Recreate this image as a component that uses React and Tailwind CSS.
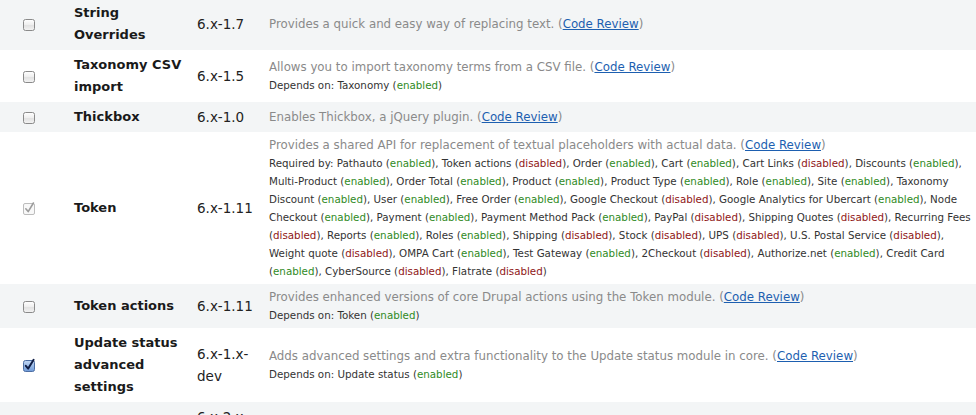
import React from "react";

const modules = [
  {
    name: "String Overrides",
    version: "6.x-1.7",
    desc: "Provides a quick and easy way of replacing text.",
    box: "off",
  },
  {
    name: "Taxonomy CSV import",
    version: "6.x-1.5",
    desc: "Allows you to import taxonomy terms from a CSV file.",
    deps: ["Depends on: Taxonomy (enabled)"],
    box: "off",
  },
  {
    name: "Thickbox",
    version: "6.x-1.0",
    desc: "Enables Thickbox, a jQuery plugin.",
    box: "off",
  },
  {
    name: "Token",
    version: "6.x-1.11",
    desc: "Provides a shared API for replacement of textual placeholders with actual data.",
    deps: [
      "Required by: Pathauto (enabled), Token actions (disabled), Order (enabled), Cart (enabled), Cart Links (disabled), Discounts (enabled),",
      "Multi-Product (enabled), Order Total (enabled), Product (enabled), Product Type (enabled), Role (enabled), Site (enabled), Taxonomy",
      "Discount (enabled), User (enabled), Free Order (enabled), Google Checkout (disabled), Google Analytics for Ubercart (enabled), Node",
      "Checkout (enabled), Payment (enabled), Payment Method Pack (enabled), PayPal (disabled), Shipping Quotes (disabled), Recurring Fees",
      "(disabled), Reports (enabled), Roles (enabled), Shipping (disabled), Stock (disabled), UPS (disabled), U.S. Postal Service (disabled),",
      "Weight quote (disabled), OMPA Cart (enabled), Test Gateway (enabled), 2Checkout (disabled), Authorize.net (enabled), Credit Card",
      "(enabled), CyberSource (disabled), Flatrate (disabled)",
    ],
    box: "locked",
  },
  {
    name: "Token actions",
    version: "6.x-1.11",
    desc: "Provides enhanced versions of core Drupal actions using the Token module.",
    deps: ["Depends on: Token (enabled)"],
    box: "off",
  },
  {
    name: "Update status advanced settings",
    version: "6.x-1.x-dev",
    desc: "Adds advanced settings and extra functionality to the Update status module in core.",
    deps: ["Depends on: Update status (enabled)"],
    box: "on",
  },
  {
    name: "Views",
    version: "6.x-2.x-dev",
    desc: "Create customized lists and queries from your database.",
    box: "off",
  },
];

// colour the (enabled) / (disabled) words, keep the parens dark
const Status = ({ text }) => {
  const parts = text.split(/\((enabled|disabled)\)/);
  return parts.map((part, i) => {
    if (i % 2 === 0) return <React.Fragment key={i}>{part}</React.Fragment>;
    return (
      <React.Fragment key={i}>
        (
        <span className={part === "enabled" ? "text-[#2f8a24]" : "text-[#8f1616]"}>
          {part}
        </span>
        )
      </React.Fragment>
    );
  });
};

const Checkbox = ({ state }) => {
  if (state === "on") {
    return (
      <svg width="14" height="15" viewBox="0 0 14 15">
        <defs>
          <linearGradient id="cbOn" x1="0" y1="0" x2="0" y2="1">
            <stop offset="0" stopColor="#c3d8f4" />
            <stop offset="1" stopColor="#6e9ad8" />
          </linearGradient>
        </defs>
        <rect x="1.5" y="2.5" width="11" height="11" rx="2" fill="url(#cbOn)" stroke="#4d6ea3" />
        <path d="M3.8 7.8 L6.2 10.6 L11.6 1.8" fill="none" stroke="#0f1d45" strokeWidth="2" strokeLinecap="round" strokeLinejoin="round" />
      </svg>
    );
  }
  if (state === "locked") {
    return (
      <svg width="14" height="15" viewBox="0 0 14 15">
        <rect x="1.5" y="2.5" width="11" height="11" rx="1.5" fill="#f8f8f8" stroke="#bdbdbd" />
        <path d="M3.8 7.8 L6.2 10.6 L11.4 2" fill="none" stroke="#9c9c9c" strokeWidth="1.6" strokeLinecap="round" strokeLinejoin="round" />
      </svg>
    );
  }
  return (
    <svg width="14" height="15" viewBox="0 0 14 15">
      <defs>
        <linearGradient id="cbOff" x1="0" y1="0" x2="0" y2="1">
          <stop offset="0" stopColor="#ffffff" />
          <stop offset="0.5" stopColor="#eeeeee" />
          <stop offset="0.55" stopColor="#e2e2e2" />
          <stop offset="1" stopColor="#f4f4f4" />
        </linearGradient>
      </defs>
      <rect x="1.5" y="2.5" width="11" height="11" rx="2" fill="url(#cbOff)" stroke="#8a8a8a" />
    </svg>
  );
};

const ModuleRow = ({ mod, striped }) => (
  <div className={`flex items-center py-1 ${striped ? "bg-[#f3f5f6]" : "bg-white"}`}>
    <div className="w-[58px] shrink-0 flex justify-center">
      <Checkbox state={mod.box} />
    </div>
    <div className="w-[139px] shrink-0 pl-[16px] pr-[7px] text-[13px] leading-[22px] font-bold text-[#1a1a1a]">
      {mod.name}
    </div>
    <div className="w-[72px] shrink-0 pr-[6px] text-[13.5px] leading-[22px] text-[#222]">
      {mod.version}
    </div>
    <div className="flex-1 min-w-0 pr-2">
      <div className="text-[11.8px] leading-[18px] text-[#8a8a8a] whitespace-nowrap">
        {mod.desc} (
        <a href="#" className="text-[#1d5fb0] underline">
          Code Review
        </a>
        )
      </div>
      {mod.deps &&
        mod.deps.map((line, i) => (
          <div key={i} className="text-[10.3px] leading-[18px] text-[#333] whitespace-nowrap">
            <Status text={line} />
          </div>
        ))}
    </div>
  </div>
);

export default function App() {
  return (
    <div className="h-[415px] overflow-hidden bg-white font-['DejaVu_Sans',Verdana,sans-serif]">
      <div className="-mt-[2px]">
        {modules.map((mod, i) => (
          <ModuleRow key={mod.name} mod={mod} striped={i % 2 === 0} />
        ))}
      </div>
    </div>
  );
}
